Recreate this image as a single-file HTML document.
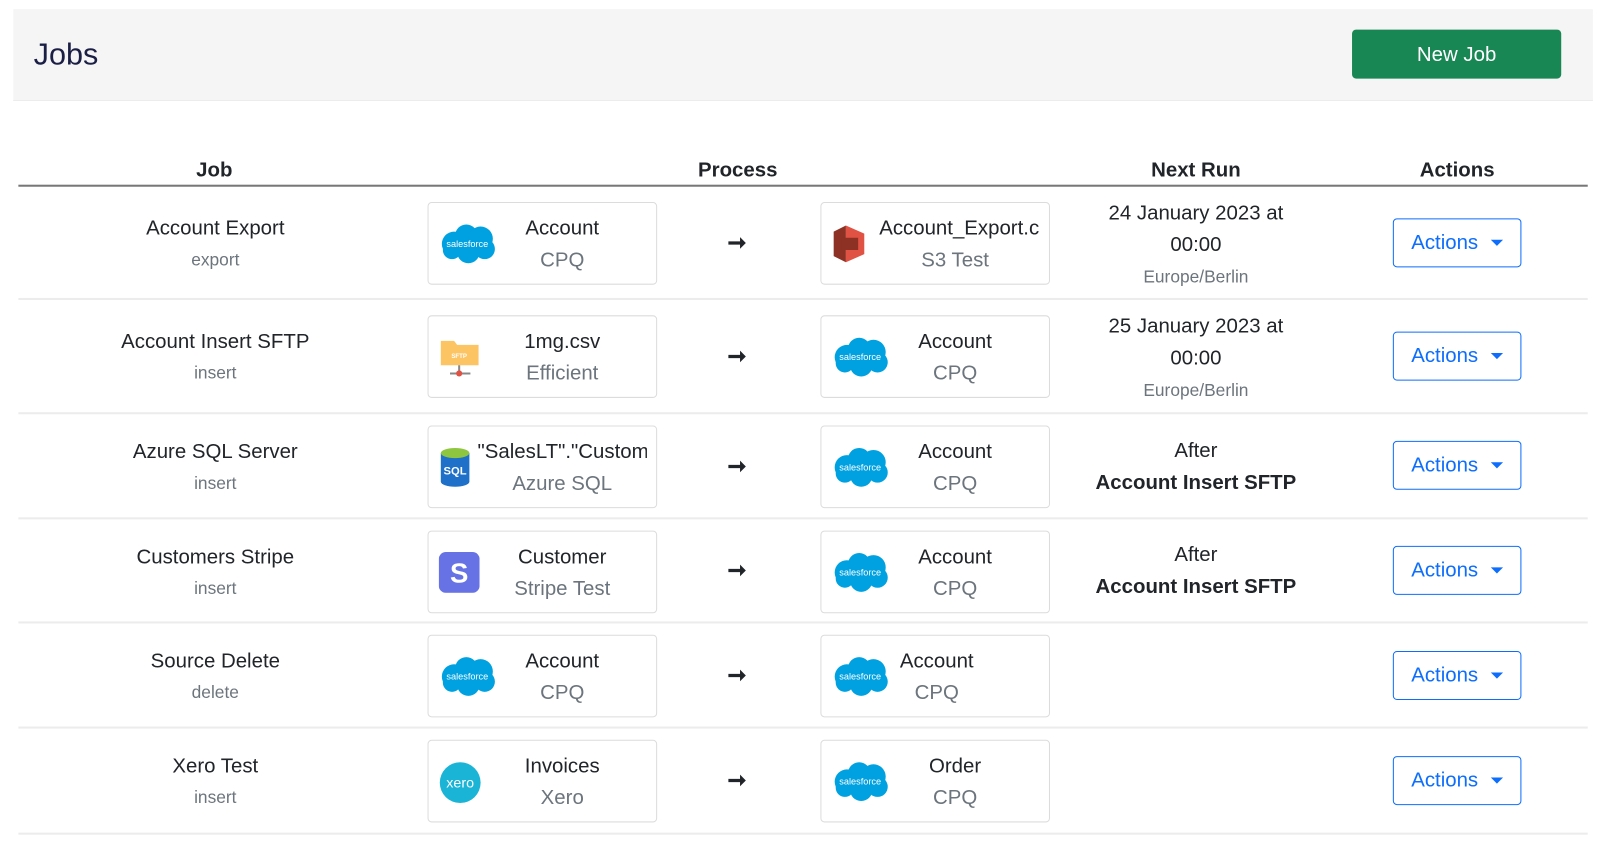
<!DOCTYPE html>
<html><head><meta charset="utf-8"><style>
*{margin:0;padding:0;box-sizing:border-box}
html,body{width:1600px;height:853px;overflow:hidden;background:#fff}
#w{position:absolute;left:0;top:0;width:1568px;height:836px;transform:scale(1.0204);transform-origin:0 0;font-family:"Liberation Sans",sans-serif;color:#212529}
.a{position:absolute}
.hdr{left:13px;top:9px;width:1548px;height:90px;background:#f5f5f5;border-bottom:1px solid #ececec}
.t{font-size:30px;color:#1b1f45;left:33px;top:37px}
.nj{left:1325px;top:29px;width:205px;height:48px;background:#198754;border-radius:4px;color:#fff;font-size:20px;text-align:center;line-height:50px}
.th{font-weight:bold;font-size:20px;top:156px;text-align:center;width:300px}
.hl{left:18px;top:181px;width:1538px;height:2px;background:#777}
.sep{left:18px;width:1538px;height:2px;background:#ececec}
.c{text-align:center;width:300px;font-size:20px}
.s{color:#6c757d;font-size:17px}
.box{width:225px;height:81px;border:1px solid #dcdcdc;border-radius:4px;background:#fff}
.bt{position:absolute;text-align:center;width:150px;font-size:20px;white-space:nowrap;overflow:hidden}
.ar{font-size:22px;font-weight:bold;left:713px}
.btn{left:1365px;width:126px;height:48px;border:1px solid #0d6efd;border-radius:4px;color:#0d6efd;font-size:20px;line-height:46px;padding-left:17px}
.btn:after{content:"";position:absolute;right:17px;top:20px;border-left:6px solid transparent;border-right:6px solid transparent;border-top:6px solid #0d6efd}
.ic{position:absolute;left:9px;top:20px}
</style></head><body><div id="w">
<div class="a hdr"></div><div class="a t">Jobs</div><div class="a nj">New Job</div>
<div class="a th" style="left:60px">Job</div>
<div class="a th" style="left:573px">Process</div>
<div class="a th" style="left:1022px">Next Run</div>
<div class="a th" style="left:1278px">Actions</div>
<div class="a hl"></div>

<svg width="0" height="0" style="position:absolute"><defs>
<g id="sf"><g fill="#00a1e0"><circle cx="16" cy="22" r="12"/><circle cx="28" cy="14" r="11"/><circle cx="42" cy="17" r="12"/><circle cx="46" cy="27" r="10"/><circle cx="30" cy="30" r="11"/><circle cx="14" cy="28" r="9"/></g><text x="29" y="25" font-size="9" fill="#fff" text-anchor="middle" font-family="Liberation Sans">salesforce</text></g>
</defs></svg>

<!-- row1 -->
<div class="a c" style="left:61px;top:213px">Account Export<br><span class="s" style="line-height:38px">export</span></div>
<div class="a box" style="left:419px;top:198px"><svg class="ic" style="top:18px" width="60" height="42"><use href="#sf"/></svg><div class="bt" style="left:56px;top:14px">Account</div><div class="bt s" style="left:56px;top:45px">CPQ</div></div>
<div class="a ar" style="top:225px">➞</div>
<div class="a box" style="left:804px;top:198px"><svg class="ic" style="left:10px;top:20px" width="34" height="40"><path d="M2 8 L14 2 V38 L2 32Z" fill="#8c3123"/><path d="M14 2 L32 10 V30 L14 38Z" fill="#e05243"/><rect x="10" y="14" width="16" height="12" fill="#8c3123"/></svg><div class="bt" style="left:50px;top:14px;width:170px">Account_Export.c</div><div class="bt s" style="left:56px;top:45px">S3 Test</div></div>
<div class="a c" style="left:1022px;top:194px;line-height:31px">24 January 2023 at<br>00:00<br><span class="s" style="line-height:28px">Europe/Berlin</span></div>
<div class="a btn" style="top:214px">Actions</div>
<div class="a sep" style="top:292px"></div>

<!-- row2 -->
<div class="a c" style="left:61px;top:324px">Account Insert SFTP<br><span class="s" style="line-height:38px">insert</span></div>
<div class="a box" style="left:419px;top:309px"><svg class="ic" style="left:11px;top:20px" width="40" height="42"><path d="M1 4 H14 L17 8 H38 V28 H1Z" fill="#fdc463"/><text x="19" y="21" font-size="6" fill="#fff" text-anchor="middle" font-family="Liberation Sans" font-weight="bold">SFTP</text><path d="M19 28 V36 M10 36 H30" stroke="#888" stroke-width="2"/><circle cx="19" cy="36" r="3" fill="#e05243"/></svg><div class="bt" style="left:56px;top:14px">1mg.csv</div><div class="bt s" style="left:56px;top:45px">Efficient</div></div>
<div class="a ar" style="top:336px">➞</div>
<div class="a box" style="left:804px;top:309px"><svg class="ic" style="top:18px" width="60" height="42"><use href="#sf"/></svg><div class="bt" style="left:56px;top:14px">Account</div><div class="bt s" style="left:56px;top:45px">CPQ</div></div>
<div class="a c" style="left:1022px;top:305px;line-height:31px">25 January 2023 at<br>00:00<br><span class="s" style="line-height:28px">Europe/Berlin</span></div>
<div class="a btn" style="top:325px">Actions</div>
<div class="a sep" style="top:404px"></div>

<!-- row3 -->
<div class="a c" style="left:61px;top:432px">Azure SQL Server<br><span class="s" style="line-height:38px">insert</span></div>
<div class="a box" style="left:419px;top:417px"><svg class="ic" style="left:10px;top:20px" width="32" height="42"><path d="M2 6 V34 A14 5 0 0 0 30 34 V6Z" fill="#1e70c8"/><ellipse cx="16" cy="6" rx="14" ry="5" fill="#8fc63f"/><text x="16" y="27" font-size="11" fill="#fff" text-anchor="middle" font-family="Liberation Sans" font-weight="bold">SQL</text></svg><div class="bt" style="left:48px;top:14px;width:166px;text-align:left">"SalesLT"."Customer"</div><div class="bt s" style="left:56px;top:45px">Azure SQL</div></div>
<div class="a ar" style="top:444px">➞</div>
<div class="a box" style="left:804px;top:417px"><svg class="ic" style="top:18px" width="60" height="42"><use href="#sf"/></svg><div class="bt" style="left:56px;top:14px">Account</div><div class="bt s" style="left:56px;top:45px">CPQ</div></div>
<div class="a c" style="left:1022px;top:427px;line-height:31px">After<br><b>Account Insert SFTP</b></div>
<div class="a btn" style="top:432px">Actions</div>
<div class="a sep" style="top:507px"></div>

<!-- row4 -->
<div class="a c" style="left:61px;top:535px">Customers Stripe<br><span class="s" style="line-height:38px">insert</span></div>
<div class="a box" style="left:419px;top:520px"><svg class="ic" style="left:10px;top:20px" width="40" height="40"><rect x="0" y="0" width="40" height="40" rx="7" fill="#6772e5"/><text x="20" y="30" font-size="27" fill="#fff" text-anchor="middle" font-family="Liberation Sans" font-weight="bold">S</text></svg><div class="bt" style="left:56px;top:14px">Customer</div><div class="bt s" style="left:56px;top:45px">Stripe Test</div></div>
<div class="a ar" style="top:546px">➞</div>
<div class="a box" style="left:804px;top:520px"><svg class="ic" style="top:18px" width="60" height="42"><use href="#sf"/></svg><div class="bt" style="left:56px;top:14px">Account</div><div class="bt s" style="left:56px;top:45px">CPQ</div></div>
<div class="a c" style="left:1022px;top:529px;line-height:31px">After<br><b>Account Insert SFTP</b></div>
<div class="a btn" style="top:535px">Actions</div>
<div class="a sep" style="top:609px"></div>

<!-- row5 -->
<div class="a c" style="left:61px;top:637px">Source Delete<br><span class="s" style="line-height:38px">delete</span></div>
<div class="a box" style="left:419px;top:622px"><svg class="ic" style="top:18px" width="60" height="42"><use href="#sf"/></svg><div class="bt" style="left:56px;top:14px">Account</div><div class="bt s" style="left:56px;top:45px">CPQ</div></div>
<div class="a ar" style="top:649px">➞</div>
<div class="a box" style="left:804px;top:622px"><svg class="ic" style="top:18px" width="60" height="42"><use href="#sf"/></svg><div class="bt" style="left:38px;top:14px">Account</div><div class="bt s" style="left:38px;top:45px">CPQ</div></div>
<div class="a btn" style="top:638px">Actions</div>
<div class="a sep" style="top:712px"></div>

<!-- row6 -->
<div class="a c" style="left:61px;top:740px">Xero Test<br><span class="s" style="line-height:38px">insert</span></div>
<div class="a box" style="left:419px;top:725px"><svg class="ic" style="left:10px;top:20px" width="42" height="42"><circle cx="21" cy="21" r="20" fill="#1ab4d7"/><text x="21" y="26" font-size="14" fill="#fff" text-anchor="middle" font-family="Liberation Sans">xero</text></svg><div class="bt" style="left:56px;top:14px">Invoices</div><div class="bt s" style="left:56px;top:45px">Xero</div></div>
<div class="a ar" style="top:752px">➞</div>
<div class="a box" style="left:804px;top:725px"><svg class="ic" style="top:18px" width="60" height="42"><use href="#sf"/></svg><div class="bt" style="left:56px;top:14px">Order</div><div class="bt s" style="left:56px;top:45px">CPQ</div></div>
<div class="a btn" style="top:741px">Actions</div>
<div class="a sep" style="top:816px"></div>
</div></body></html>
